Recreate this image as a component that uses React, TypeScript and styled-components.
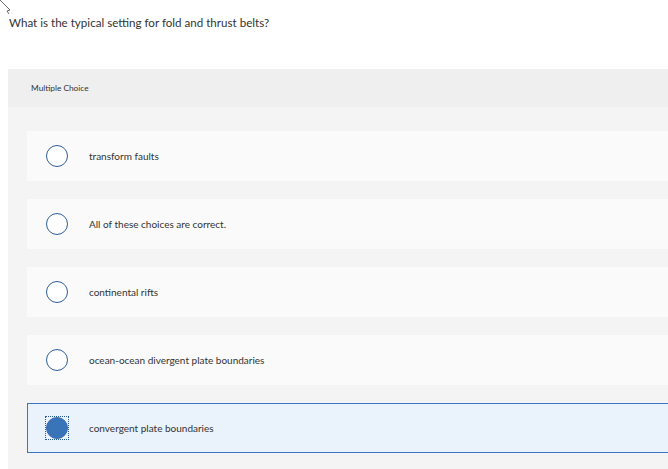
import React from "react";
import styled, { createGlobalStyle } from "styled-components";

const Global = createGlobalStyle`
  html, body { margin: 0; padding: 0; background: #ffffff; }
  body { font-family: Lato, "Liberation Sans", sans-serif; color: #333; }
`;

const Page = styled.div`
  position: relative;
  width: 668px;
  height: 469px;
  overflow: hidden;
`;

const Cursor = styled.svg`
  position: absolute;
  left: 0;
  top: 0;
`;

const Question = styled.div`
  padding: 16px 0 0 9px;
  height: 69px;
  box-sizing: border-box;
  font-size: 11.6px;
  line-height: 13px;
  color: #333;
`;

const Panel = styled.div`
  margin-left: 8px;
  background: #f4f4f4;
  padding-bottom: 40px;
`;

const Header = styled.div`
  height: 38px;
  background: #efefef;
  display: flex;
  align-items: center;
  padding-left: 23px;
  font-size: 8.3px;
  color: #333;
`;

const List = styled.div`
  display: flex;
  flex-direction: column;
  gap: 18px;
  padding: 24px 0 0 19px;
`;

const Card = styled.div<{ $selected?: boolean }>`
  height: 50px;
  box-sizing: border-box;
  display: flex;
  align-items: center;
  gap: 21px;
  padding-left: 18px;
  background: ${(p) => (p.$selected ? "#eaf2fc" : "#fafafa")};
  border: 1px solid ${(p) => (p.$selected ? "#3a77c0" : "transparent")};
  border-right: none;
`;

const RadioWrap = styled.div<{ $selected?: boolean }>`
  width: 22px;
  height: 22px;
  box-sizing: border-box;
  outline: ${(p) => (p.$selected ? "1px dotted #2a5a96" : "none")};
  outline-offset: 0px;
  display: flex;
  align-items: center;
  justify-content: center;
`;

const Radio = styled.div<{ $selected?: boolean }>`
  width: 22px;
  height: 22px;
  box-sizing: border-box;
  border-radius: 50%;
  border: 1.3px solid ${(p) => (p.$selected ? "#3870b4" : "#2c5f9a")};
  background: ${(p) => (p.$selected ? "#3a74b8" : "#ffffff")};
`;

const Label = styled.div`
  font-size: 10px;
  color: #333;
`;

const options = [
  "transform faults",
  "All of these choices are correct.",
  "continental rifts",
  "ocean-ocean divergent plate boundaries",
  "convergent plate boundaries",
];

export default function App() {
  return (
    <Page>
      <Global />
      <Cursor width="14" height="24" viewBox="0 0 14 24">
        <path d="M0 0 L10 10 L7 11 L9 14" fill="none" stroke="#444" strokeWidth="0.8" />
      </Cursor>
      <Question>What is the typical setting for fold and thrust belts?</Question>
      <Panel>
        <Header>Multiple Choice</Header>
        <List>
          {options.map((o, i) => {
            const sel = i === 4;
            return (
              <Card key={o} $selected={sel}>
                <RadioWrap $selected={sel}>
                  <Radio $selected={sel} />
                </RadioWrap>
                <Label>{o}</Label>
              </Card>
            );
          })}
        </List>
      </Panel>
    </Page>
  );
}
